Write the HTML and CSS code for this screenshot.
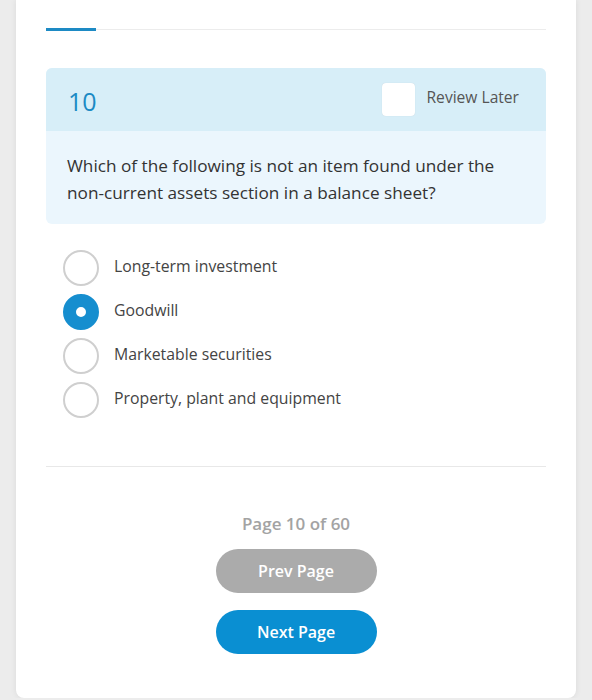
FILE: index.html
```html
<!DOCTYPE html>
<html>
	<head>
		<meta http-equiv="Content-Type" content="text/html; charset=UTF-8" />
		<meta name="viewport" content="initial-scale=1.0">
		<title>Quiz</title>
		<link rel="stylesheet" href="styles.css">
	</head>
	<body>
		<div class="card">
			<div class="tab-line"><span class="tab-active"></span></div>
			<div class="q-box">
				<div class="q-head">
					<span class="q-num">10</span>
					<label class="review">
						<span class="check-box"></span>
						<span>Review Later</span>
					</label>
				</div>
				<div class="q-text">
					Which of the following is not an item found under the non-current assets section in a balance sheet?
				</div>
			</div>
			<div class="opt-list">
				<div class="opt-row"><span class="radio"></span><span>Long-term investment</span></div>
				<div class="opt-row"><span class="radio checked"></span><span>Goodwill</span></div>
				<div class="opt-row"><span class="radio"></span><span>Marketable securities</span></div>
				<div class="opt-row"><span class="radio"></span><span>Property, plant and equipment</span></div>
			</div>
			<div class="pager">
				<div class="page-count">Page 10 of 60</div>
				<button class="pg-btn prev">Prev Page</button>
				<button class="pg-btn next">Next Page</button>
			</div>
		</div>
	</body>
</html>
```

FILE: styles.css
```css
html, body { margin: 0; padding: 0; background-color: #ececec; }
body { font-family: "Open Sans", "Noto Sans", sans-serif; }
.card {
	margin: 0 16px;
	height: 698px;
	padding: 0 30px;
	background-color: white;
	border-radius: 0 0 8px 8px;
	box-shadow: 0 0 6px rgba(0, 0, 0, 0.08);
}
.tab-line {
	height: 29px;
	border-bottom: 1px solid #ececec;
	position: relative;
}
.tab-active {
	position: absolute;
	left: 0; bottom: -2px;
	width: 50px; height: 3px;
	background-color: #1d8ac4;
}
.q-box {
	margin-top: 38px;
	border-radius: 6px;
	overflow: hidden;
	background-color: #ebf6fd;
}
.q-head {
	height: 63px;
	display: flex;
	align-items: center;
	justify-content: space-between;
	padding: 0 27px 0 22px;
	background-color: #d7eef8;
}
.q-num {
	font-size: 25px;
	font-weight: 500;
	color: #1b8ac4;
	padding-top: 2px;
}
.review {
	display: flex;
	align-items: center;
	gap: 12px;
	font-size: 15.6px;
	color: #555;
}
.review > span:last-child { margin-top: -5px; }
.check-box {
	width: 33px; height: 33px;
	background-color: white;
	border-radius: 4px;
	box-shadow: 0 0 1px rgba(0, 0, 0, 0.15);
}
.q-text {
	padding: 21px 21px 18px;
	font-size: 17.2px;
	line-height: 27px;
	color: #333;
}
.opt-list { margin-top: 22px; padding-left: 17px; }
.opt-row {
	height: 44px;
	display: flex;
	align-items: center;
	gap: 15px;
	font-size: 15.8px;
	color: #444;
}
.opt-row > span:last-child { margin-top: -5px; }
.radio {
	box-sizing: border-box;
	width: 36px; height: 36px;
	border: 2px solid #cfcfcf;
	border-radius: 50%;
	background-color: white;
}
.radio.checked {
	border: 13px solid #168ecf;
	background-color: white;
}
.pager {
	margin-top: 44px;
	border-top: 1px solid #e8e8e8;
	padding-top: 46px;
	display: flex;
	flex-direction: column;
	align-items: center;
}
.page-count {
	font-size: 17px;
	font-weight: 600;
	color: #a3a3a3;
	line-height: 22px;
}
.pg-btn {
	width: 161px; height: 44px;
	border: 0;
	border-radius: 22px;
	color: white;
	font: 600 16px "Open Sans", sans-serif;
	cursor: pointer;
}
.prev { margin-top: 14px; background-color: #ababab; }
.next { margin-top: 17px; background-color: #0a8fd2; }
```
